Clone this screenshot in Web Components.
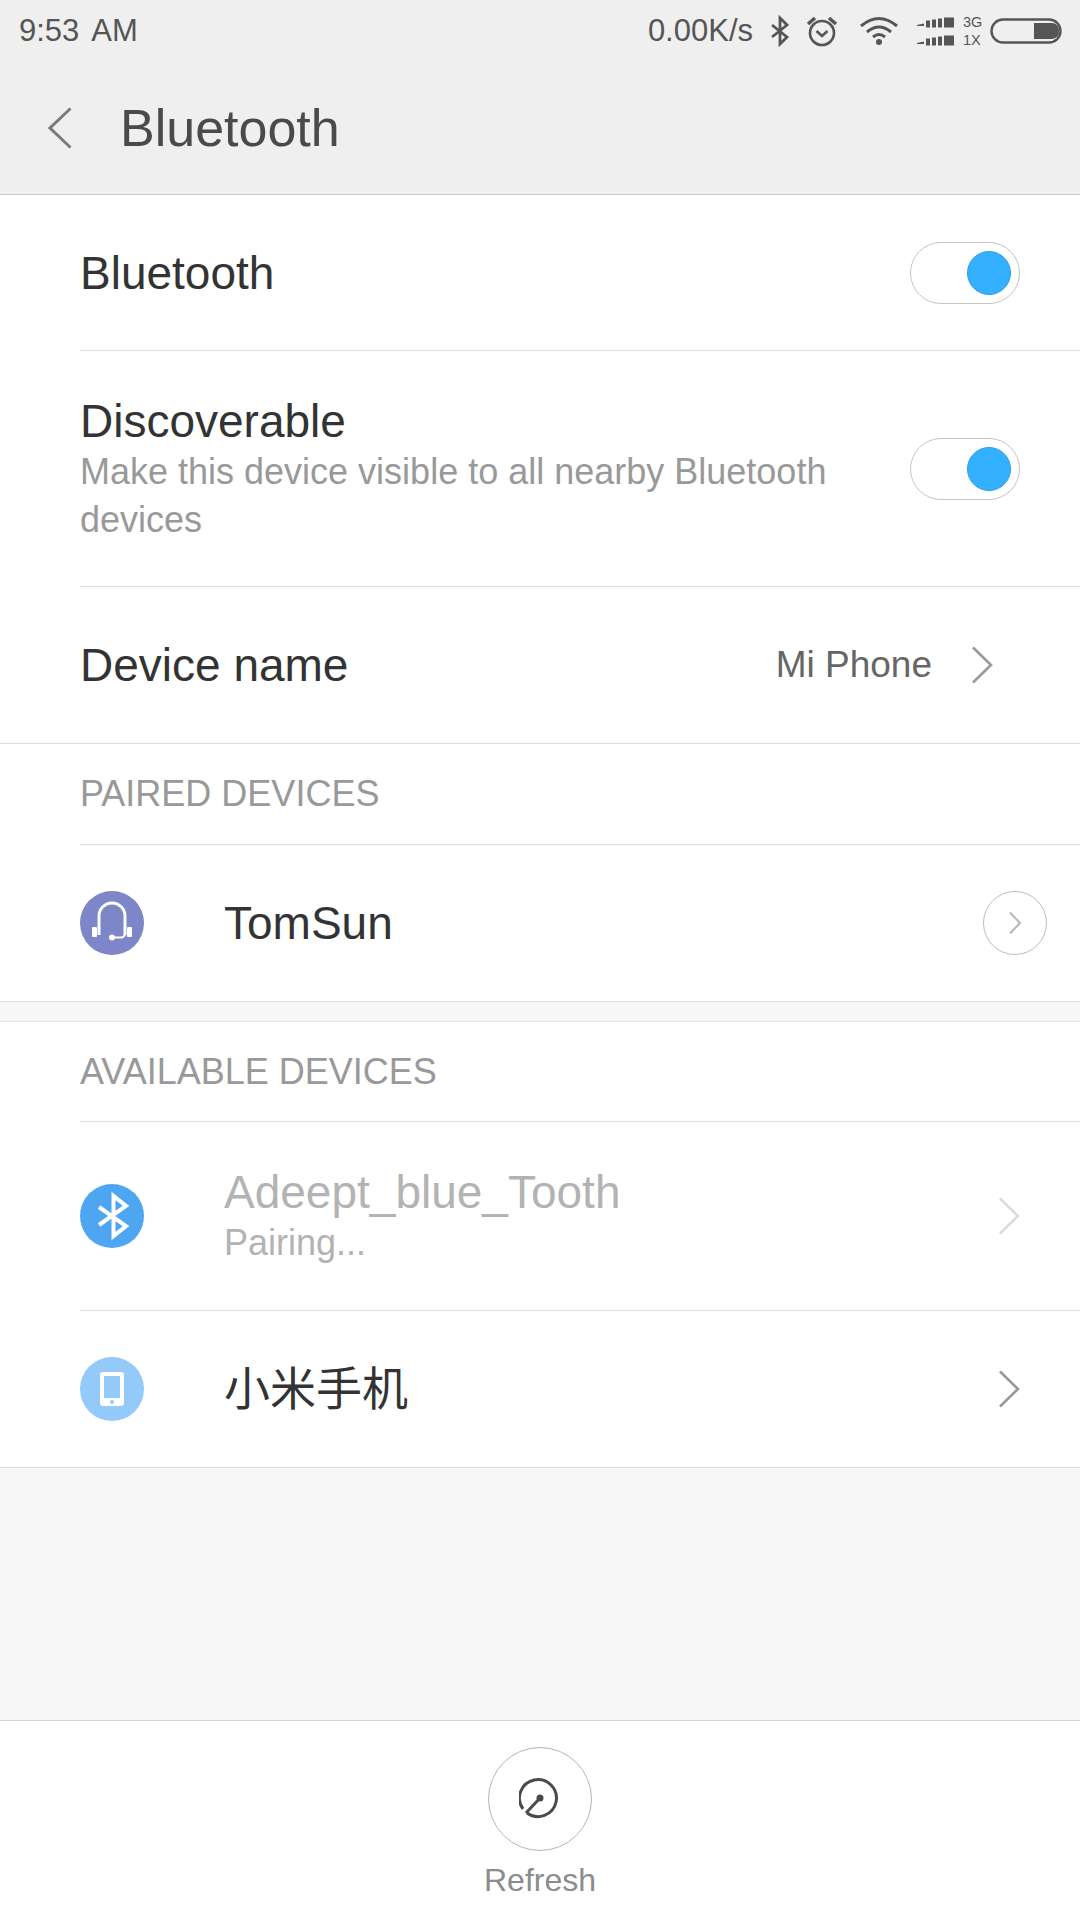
<!DOCTYPE html>
<html>
<head>
<meta charset="utf-8">
<style>
  html, body { margin: 0; padding: 0; }
  body { width: 1080px; height: 1920px; background: #f7f7f7; font-family: "Liberation Sans", "Noto Sans CJK SC", sans-serif; }
  app-page { height: 1920px; }
</style>
</head>
<body>
<app-page>
  <status-bar></status-bar>
  <title-bar>Bluetooth</title-bar>
  <div class="list">
    <set-row height="156" divider="inset"><span slot="title">Bluetooth</span><toggle-switch slot="end"></toggle-switch></set-row>
    <set-row height="236" divider="inset" multi>
      <span slot="title">Discoverable</span>
      <span slot="sub">Make this device visible to all nearby Bluetooth devices</span>
      <toggle-switch slot="end"></toggle-switch>
    </set-row>
    <set-row height="157" divider="full">
      <span slot="title">Device name</span>
      <span slot="value">Mi Phone</span>
      <row-chevron slot="end"></row-chevron>
    </set-row>
    <section-head height="101">PAIRED DEVICES</section-head>
    <device-row height="157" divider="full" color="#7c86c8">
      <svg slot="icon" viewBox="0 0 64 64" width="64" height="64"><path d="M19 44V25a13 13 0 0 1 26 0v19" fill="none" stroke="#fff" stroke-width="3"/><rect x="12" y="36" width="5" height="10" rx="1" fill="#fff"/><rect x="47" y="36" width="5" height="10" rx="1" fill="#fff"/><path d="M32 46.500h9q3 0 4-3" fill="none" stroke="#fff" stroke-width="2"/><circle cx="32" cy="46.500" r="3" fill="#fff"/></svg>
      <span slot="title">TomSun</span>
      <circle-chevron slot="end"></circle-chevron>
    </device-row>
    <div class="gap"></div>
    <section-head height="100" top>AVAILABLE DEVICES</section-head>
    <device-row height="189" divider="inset" color="#4ea6f2" dim>
      <svg slot="icon" viewBox="0 0 64 64" width="64" height="64"><path d="M19 23l27 19-12.500 10V12L46 22 19 41" fill="none" stroke="#fff" stroke-width="4"/></svg>
      <span slot="title">Adeept_blue_Tooth</span>
      <span slot="sub">Pairing...</span>
      <row-chevron slot="end" faint></row-chevron>
    </device-row>
    <device-row height="157" divider="full" color="#94cafa">
      <svg slot="icon" viewBox="0 0 64 64" width="64" height="64"><path fill="#fff" fill-rule="evenodd" d="M23 15h18a3 3 0 0 1 3 3v28a3 3 0 0 1-3 3H23a3 3 0 0 1-3-3V18a3 3 0 0 1 3-3zm1 4v22h16V19z"/><circle cx="32" cy="45" r="2" fill="#94cafa"/></svg>
      <span slot="title">小米手机</span>
      <row-chevron slot="end"></row-chevron>
    </device-row>
  </div>
  <refresh-bar>Refresh</refresh-bar>
</app-page>

<script>
class AppPage extends HTMLElement {
  constructor() {
    super();
    this.attachShadow({ mode: 'open' });
    this.shadowRoot.innerHTML = `
      <style>
        :host { display: flex; flex-direction: column; }
        .fill { flex: 1; }
      </style>
      <slot></slot>`;
  }
}

class StatusBar extends HTMLElement {
  constructor() {
    super();
    this.attachShadow({ mode: 'open' });
    this.shadowRoot.innerHTML = `
      <style>
        :host { display: flex; align-items: center; height: 62px; padding: 0 18px 0 19px; background: #efefef; color: #555; font-size: 31px; }
        .time { flex: 1; word-spacing: 5px; }
        .speed { margin-right: 17px; }
        svg { display: block; }
        .sig { margin-left: 22px; }
        .net { font-size: 14.500px; line-height: 18px; width: 27px; margin-left: 8px; }
      </style>
      <span class="time">9:53 AM</span>
      <span class="speed">0.00K/s</span>
      <svg width="20" height="32" viewBox="0 0 20 32"><path d="M2 10l15 12-7 7V3l7 7L2 22" fill="none" stroke="#555" stroke-width="2.800"/></svg>
      <svg width="32" height="32" viewBox="0 0 32 32" style="margin-left:16px"><circle cx="16" cy="18" r="12" fill="none" stroke="#555" stroke-width="2.600"/><path d="M10.500 16l5.500 5 5.500-5" fill="none" stroke="#555" stroke-width="2.600"/><path d="M2 9l7-6M30 9l-7-6" stroke="#555" stroke-width="3.500"/></svg>
      <svg class="sig" width="38" height="30" viewBox="0 0 38 30"><path d="M1 10q18-15 36 0M7 16q12-10 24 0M13 21q6-5 12 0" fill="none" stroke="#555" stroke-width="3"/><circle cx="19" cy="26" r="3" fill="#555"/></svg>
      <svg class="sig" width="38" height="32" viewBox="0 0 38 32" style="margin-left:19px">
        <path d="M0 10h7V7.500L0 9zM9 4.500h4v7H9zM15 3.500h4v8h-4zM21 2.500h4v9h-4zM27 1.500h10v10H27z" transform="translate(0 1)" fill="#555"/>
        <path d="M0 29h7V26.500L0 28zM9 23.500h4v7H9zM15 22.500h4v8h-4zM21 21.500h4v9h-4zM27 20.500h10v10H27z" fill="#555"/>
      </svg>
      <span class="net">3G<br>1X</span>
      <svg width="72" height="26" viewBox="0 0 72 26"><rect x="1.500" y="1.500" width="69" height="23" rx="11.500" fill="none" stroke="#555" stroke-width="2.400"/><path d="M44 5h18a7 7 0 0 1 7 8 7 7 0 0 1-7 8H44z" fill="#555"/></svg>`;
  }
}

class TitleBar extends HTMLElement {
  constructor() {
    super();
    this.attachShadow({ mode: 'open' });
    this.shadowRoot.innerHTML = `
      <style>
        :host { display: flex; align-items: center; height: 132px; padding-left: 48px; background: #efefef; border-bottom: 1px solid #c9c9c9; color: #4a4a4a; font-size: 52px; }
        svg { margin-right: 48px; }
      </style>
      <svg width="24" height="42" viewBox="0 0 24 42"><path d="M22.500 1.500L2 21l20.500 19.500" fill="none" stroke="#7a7a7a" stroke-width="3"/></svg>
      <slot></slot>`;
  }
}

class SetRow extends HTMLElement {
  constructor() {
    super();
    this.attachShadow({ mode: 'open' });
    this.shadowRoot.innerHTML = `
      <style>
        :host { display: block; background: #fff; }
        .row { box-sizing: border-box; display: flex; align-items: center; padding: 0 60px 0 80px; }
        .row.inset { margin-left: 0; }
        .main { flex: 1; }
        .title { font-size: 46px; color: #333; line-height: 54px; }
        .sub { font-size: 36px; color: #999; line-height: 48px; max-width: 800px; }
        .sub:empty { display: none; }
        .value { font-size: 37px; color: #666; margin-right: 39px; }
        hr { margin: 0; border: 0; height: 1px; background: #dcdcdc; }
        hr.inset { margin-left: 80px; }
      </style>
      <div class="row">
        <div class="main">
          <div class="title"><slot name="title"></slot></div>
          <div class="sub"><slot name="sub"></slot></div>
        </div>
        <div class="value"><slot name="value"></slot></div>
        <slot name="end"></slot>
      </div>
      <hr>`;
    const h = +this.getAttribute('height');
    this.shadowRoot.querySelector('.row').style.height = (h - 1) + 'px';
    if (this.getAttribute('divider') === 'inset') this.shadowRoot.querySelector('hr').className = 'inset';
  }
}

class DeviceRow extends HTMLElement {
  constructor() {
    super();
    this.attachShadow({ mode: 'open' });
    this.shadowRoot.innerHTML = `
      <style>
        :host { display: block; background: #fff; }
        .row { box-sizing: border-box; display: flex; align-items: center; padding: 0 33px 0 80px; }
        .icon { width: 64px; height: 64px; border-radius: 50%; margin-right: 80px; flex: none; }
        .main { flex: 1; }
        .title { font-size: 46px; color: #333; line-height: 54px; }
        .sub { font-size: 36px; color: #999; line-height: 48px; }
        :host([dim]) .title { color: #b3b3b3; }
        :host([dim]) .sub { color: #b3b3b3; }
        hr { margin: 0; border: 0; height: 1px; background: #dcdcdc; }
        hr.inset { margin-left: 80px; }
        svg, ::slotted(svg) { display: block; }
      </style>
      <div class="row">
        <div class="icon"><slot name="icon"></slot></div>
        <div class="main">
          <div class="title"><slot name="title"></slot></div>
          <div class="sub"><slot name="sub"></slot></div>
        </div>
        <slot name="end"></slot>
      </div>
      <hr>`;
    const h = +this.getAttribute('height');
    this.shadowRoot.querySelector('.row').style.height = (h - 1) + 'px';
    this.shadowRoot.querySelector('.icon').style.background = this.getAttribute('color');
    if (this.getAttribute('divider') === 'inset') this.shadowRoot.querySelector('hr').className = 'inset';
  }
}

class SectionHead extends HTMLElement {
  constructor() {
    super();
    this.attachShadow({ mode: 'open' });
    this.shadowRoot.innerHTML = `
      <style>
        :host { display: block; background: #fff; }
        .head { box-sizing: border-box; display: flex; align-items: center; margin-left: 80px; border-bottom: 1px solid #dcdcdc; font-size: 36px; color: #999; }
      </style>
      <div class="head"><slot></slot></div>`;
    this.shadowRoot.querySelector('.head').style.height = this.getAttribute('height') + 'px';
  }
}

class ToggleSwitch extends HTMLElement {
  constructor() {
    super();
    this.attachShadow({ mode: 'open' });
    this.shadowRoot.innerHTML = `
      <style>
        :host { display: block; box-sizing: border-box; width: 110px; height: 62px; border: 1px solid #c4c4c4; border-radius: 31px; position: relative; }
        .knob { position: absolute; top: 8px; right: 8px; width: 44px; height: 44px; box-sizing: border-box; border-radius: 50%; background: #33b0ff; border: 1px solid #2d9de3; }
      </style>
      <div class="knob"></div>`;
  }
}

class RowChevron extends HTMLElement {
  constructor() {
    super();
    this.attachShadow({ mode: 'open' });
    this.shadowRoot.innerHTML = `
      <style>
        :host { display: block; width: 22px; height: 38px; margin-right: 0; }
        svg { display: block; }
      </style>
      <svg width="22" height="38" viewBox="0 0 22 38"><path d="M2 1.500L20 19 2 36.500" fill="none" stroke="#999" stroke-width="2.600"/></svg>`;
    if (this.hasAttribute('faint')) this.shadowRoot.querySelector('path').setAttribute('stroke', '#dcdcdc');
    this.style.marginRight = '27px';
  }
}

class CircleChevron extends HTMLElement {
  constructor() {
    super();
    this.attachShadow({ mode: 'open' });
    this.shadowRoot.innerHTML = `
      <style>
        :host { display: flex; align-items: center; justify-content: center; box-sizing: border-box; width: 64px; height: 64px; border: 1px solid #bdbdbd; border-radius: 50%; }
        svg { display: block; }
      </style>
      <svg width="14" height="24" viewBox="0 0 14 24"><path d="M2 1.500L12 12 2 22.500" fill="none" stroke="#b5b5b5" stroke-width="2"/></svg>`;
  }
}

class RefreshBar extends HTMLElement {
  constructor() {
    super();
    this.attachShadow({ mode: 'open' });
    this.shadowRoot.innerHTML = `
      <style>
        :host { display: flex; flex-direction: column; align-items: center; margin-top: auto; height: 200px; box-sizing: border-box; padding-top: 26px; background: #fff; border-top: 1px solid #d6d6d6; color: #8c8c8c; font-size: 32px; }
        .btn { box-sizing: border-box; width: 104px; height: 104px; border: 1px solid #b5b5b5; border-radius: 50%; display: flex; align-items: center; justify-content: center; margin-bottom: 11px; }
      </style>
      <div class="btn">
        <svg width="42" height="42" viewBox="0 0 42 42"><path d="M4 31A18.500 18.500 0 1 1 8 35" fill="none" stroke="#4a4a4a" stroke-width="3"/><path d="M7 35L21 20" stroke="#4a4a4a" stroke-width="3"/><circle cx="21" cy="20" r="3.500" fill="#4a4a4a"/></svg>
      </div>
      <slot></slot>`;
  }
}

customElements.define('app-page', AppPage);
customElements.define('status-bar', StatusBar);
customElements.define('title-bar', TitleBar);
customElements.define('set-row', SetRow);
customElements.define('device-row', DeviceRow);
customElements.define('section-head', SectionHead);
customElements.define('toggle-switch', ToggleSwitch);
customElements.define('row-chevron', RowChevron);
customElements.define('circle-chevron', CircleChevron);
customElements.define('refresh-bar', RefreshBar);
</script>
<style>
  .gap { height: 20px; background: #f7f7f7; border-bottom: 1px solid #e3e3e3; box-sizing: border-box; }
</style>
</body>
</html>
